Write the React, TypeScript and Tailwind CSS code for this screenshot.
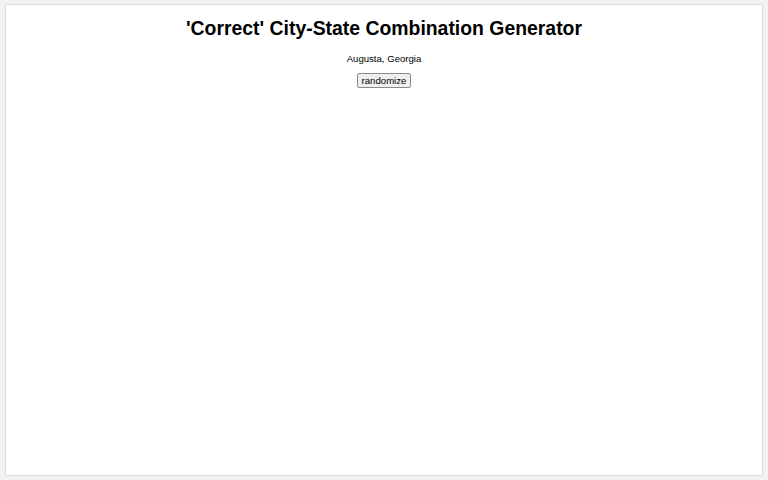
import { useState } from 'react';

const combos = [
  'Augusta, Georgia',
  'Augusta, Maine',
  'Portland, Oregon',
  'Portland, Maine',
  'Springfield, Illinois',
  'Columbus, Ohio',
];

export default function App() {
  const [pick, setPick] = useState(0);

  return (
    <div className="min-h-screen bg-[#f2f2f2] p-[4px_5px_4px_5px] font-['Liberation_Sans',Arial,sans-serif] text-black">
      <div className="flex h-[472px] flex-col items-center border border-[#dcdcdc] bg-white">
        <h1 className="mt-[11px] text-[19.4px] font-bold leading-[24px]">
          'Correct' City-State Combination Generator
        </h1>
        <p className="mt-[13px] text-[9.6px] leading-[12px]">{combos[pick]}</p>
        <button
          type="button"
          onClick={() => setPick((pick + 1) % combos.length)}
          className="mt-[8px] h-[15px] rounded-[2px] border border-[#8a8a8a] bg-[#efefef] px-[4px] text-[9.6px] leading-[12px]"
        >
          randomize
        </button>
      </div>
    </div>
  );
}
